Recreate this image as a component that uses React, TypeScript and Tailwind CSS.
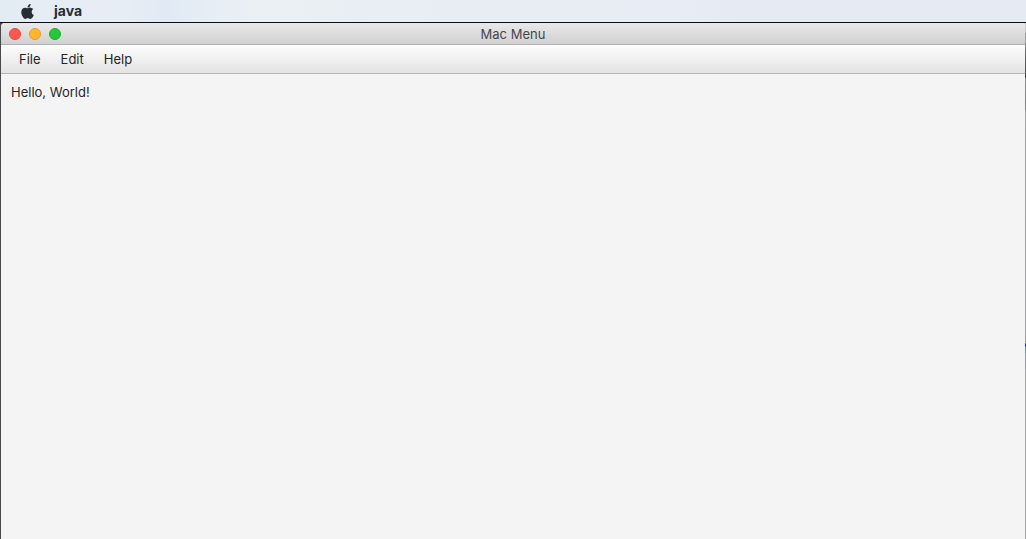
import { FaApple } from "react-icons/fa";

const menus = ["File", "Edit", "Help"];

const controls = [
  { label: "Close", color: "border-[#e2463f] bg-[#ff5650]" },
  { label: "Minimize", color: "border-[#e09e29] bg-[#ffb62c]" },
  { label: "Zoom", color: "border-[#1eac2e] bg-[#27c63b]" },
];

function SystemBar() {
  return (
    <header className="flex h-[23px] shrink-0 items-center border-b border-[#0b1016] bg-[linear-gradient(90deg,#e4ecf3_0%,#e8edf5_12%,#e1eaf4_16%,#ebf0f4_25%,#e8edf4_45%,#e8edf5_65%,#e5eaf3_72%,#e6ebf3_100%)] pl-5 text-[#272d35]">
      <div className="flex h-full w-full items-center gap-5">
        <button aria-label="Apple menu" className="flex w-3.5 justify-center">
          <FaApple className="size-[17px] shrink-0" />
        </button>
        <button className="text-sm leading-5 font-bold">java</button>
      </div>
    </header>
  );
}

function TitleBar() {
  return (
    <div className="grid h-[22px] shrink-0 grid-cols-[1fr_auto_1fr] items-center border-b border-[#b1b1b1] bg-linear-to-b from-[#e9e9e9] to-[#d1d1d1] px-2">
      <div className="flex gap-2">
        {controls.map(({ label, color }) => (
          <button key={label} aria-label={label} className={`size-3 rounded-full border ${color}`} />
        ))}
      </div>
      <h1 className="text-[13px] leading-5 text-[#474747]">Mac Menu</h1>
    </div>
  );
}

export default function App() {
  return (
    <div className="flex min-h-screen flex-col bg-[#0b1016] font-['Inter','Liberation_Sans',sans-serif]">
      <SystemBar />
      <div className="flex grow bg-linear-to-r from-[#48484a] to-[#d8d8d8]">
        <section className="ml-px flex grow flex-col overflow-hidden rounded-t-[4px] bg-[#f4f4f4]">
          <TitleBar />
          <nav className="flex h-[29px] shrink-0 items-center border-b border-[#b5b5b5] bg-linear-to-b from-[#fdfdfd] to-[#e3e3e3] px-2">
            {menus.map((name) => (
              <button key={name} className="px-2.5 text-[13px] leading-5 text-[#262626]">
                {name}
              </button>
            ))}
          </nav>
          <main className="px-2.5 py-2 text-[13px] leading-5 text-[#262626]">Hello, World!</main>
        </section>
        <div className="w-px shrink-0 bg-[linear-gradient(180deg,#d4d4d4_0px,#c8c8c8_9px,#a4a4a4_10px,#a0a0a0_18px,#666666_30px,#505050_52px,#222222_53px,#222222_54px,#909090_55px,#808080_86px,#a4a4a4_88px,#a0a0a2_320px,#2020a0_321px,#2020a0_323px,#7890a0_324px,#7890a0_329px,#9898a4_330px,#9898a4_345px,#a4a4a4_346px)]" />
      </div>
    </div>
  );
}
